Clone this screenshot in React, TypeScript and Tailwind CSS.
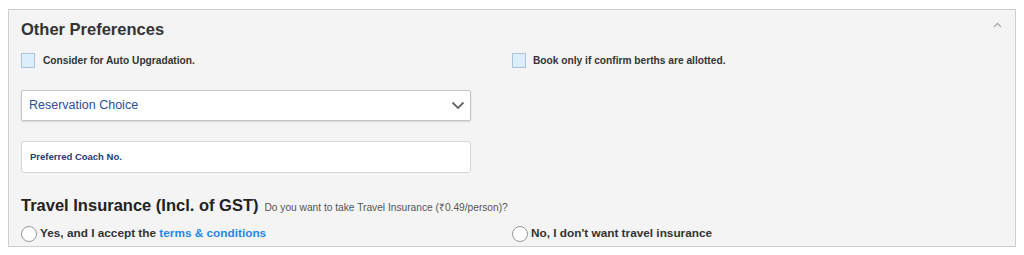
export default function App() {
  return (
    <div className="h-[255px] w-[1024px] bg-white pl-2 pr-[8px] pt-[9px] font-['Liberation_Sans',Arial,sans-serif]">
      <div className="relative h-[238px] border border-[#cfcfcf] bg-[#f4f4f4] pl-3 pt-[8px]">
        <svg className="absolute right-[13px] top-[12px]" width="9" height="6" viewBox="0 0 9 6">
          <path d="M1 5 L4.5 1.5 L8 5" fill="none" stroke="#aaa" strokeWidth="1.3" />
        </svg>
        <h2 className="text-[16.5px] font-bold leading-[22px] text-[#333]">Other Preferences</h2>

        <div className="mt-[13px] flex items-center">
          <label className="flex w-[491px] items-center gap-[8px]">
            <span className="h-[15px] w-[14px] border border-[#a9c4dc] bg-[#dceefc]" />
            <span className="text-[10.2px] font-bold text-[#333]">Consider for Auto Upgradation.</span>
          </label>
          <label className="flex items-center gap-[7px]">
            <span className="h-[15px] w-[14px] border border-[#a9c4dc] bg-[#dceefc]" />
            <span className="text-[10.2px] font-bold text-[#333]">Book only if confirm berths are allotted.</span>
          </label>
        </div>

        <div className="mt-[22px] flex h-[31px] w-[450px] items-center justify-between rounded-[2px] border border-[#c4c4c4] bg-white pl-[7px] pr-[5px] shadow-[0_1px_2px_rgba(0,0,0,0.12)]">
          <span className="text-[12.5px] text-[#2d4f93]">Reservation Choice</span>
          <svg width="14" height="9" viewBox="0 0 14 9">
            <path d="M1.5 1.5 L7 7 L12.5 1.5" fill="none" stroke="#666" strokeWidth="1.8" />
          </svg>
        </div>

        <div className="mt-[20px] flex h-[32px] w-[450px] items-center rounded-[3px] border border-[#d6d6d6] bg-white pl-[8px]">
          <span className="text-[9.5px] font-bold text-[#1e3a7b]">Preferred Coach No.</span>
        </div>

        <div className="mt-[20px] flex items-baseline gap-[6px]">
          <span className="text-[16.5px] font-bold text-[#222]">Travel Insurance (Incl. of GST)</span>
          <span className="text-[10.2px] text-[#555]">Do you want to take Travel Insurance (₹0.49/person)?</span>
        </div>

        <div className="mt-[7px] flex items-center">
          <label className="flex w-[491px] items-center gap-[3px]">
            <span className="h-[16px] w-[16px] rounded-full border border-[#999] bg-white" />
            <span className="text-[11.8px] font-bold text-[#333]">
              Yes, and I accept the <span className="text-[#1e88e5]">terms &amp; conditions</span>
            </span>
          </label>
          <label className="flex items-center gap-[3px]">
            <span className="h-[16px] w-[16px] rounded-full border border-[#999] bg-white" />
            <span className="text-[11.8px] font-bold text-[#333]">No, I don't want travel insurance</span>
          </label>
        </div>
      </div>
    </div>
  );
}
